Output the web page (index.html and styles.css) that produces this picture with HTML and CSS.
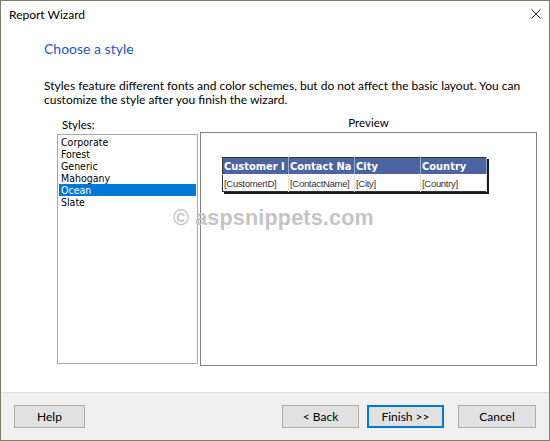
FILE: index.html
```html
<!DOCTYPE html>
<html lang="en">
<head>
  <meta charset="UTF-8" />
  <title>Report Wizard</title>
  <link rel="stylesheet" href="styles.css">
</head>
<body>
  <div class="window">
    <div class="titlebar">
      <span class="title">Report Wizard</span>
      <svg class="close" width="10" height="10" viewBox="0 0 10 10">
        <path d="M0.5 0.5 L9.5 9.5 M9.5 0.5 L0.5 9.5" stroke="#222" stroke-width="1" fill="none" />
      </svg>
    </div>

    <div class="content">
      <h1 class="heading">Choose a style</h1>
      <p class="desc">Styles feature different fonts and color schemes, but do not affect the basic layout. You can customize the style after you finish the wizard.</p>

      <div class="panes">
        <div class="styles-col">
          <div class="label">Styles:</div>
          <ul class="listbox">
            <li>Corporate</li>
            <li>Forest</li>
            <li>Generic</li>
            <li>Mahogany</li>
            <li class="selected">Ocean</li>
            <li>Slate</li>
          </ul>
        </div>
        <div class="preview-col">
          <div class="label center">Preview</div>
          <div class="preview">
            <table class="report">
              <tr class="head">
                <th>Customer I</th>
                <th>Contact Na</th>
                <th>City</th>
                <th>Country</th>
              </tr>
              <tr>
                <td>[CustomerID]</td>
                <td>[ContactName]</td>
                <td>[City]</td>
                <td>[Country]</td>
              </tr>
            </table>
          </div>
        </div>
      </div>

      <div class="watermark">© aspsnippets.com</div>
    </div>

    <div class="footer">
      <button class="btn help">Help</button>
      <div class="spacer"></div>
      <button class="btn back">&lt; Back</button>
      <button class="btn default">Finish &gt;&gt;</button>
      <button class="btn cancel">Cancel</button>
    </div>
  </div>
</body>
</html>
```

FILE: styles.css
```css
body {
  margin: 0;
  font-family: Lato, "Noto Sans", sans-serif;
  background: #fff;
}
.window {
  width: 550px;
  height: 441px;
  box-sizing: border-box;
  border: 1px solid #7b7f68;
  display: flex;
  flex-direction: column;
  background: #fff;
}
.titlebar {
  height: 29px;
  display: flex;
  align-items: center;
  padding: 0 0 0 8px;
  font-size: 12px;
  color: #000;
}
.title {
  flex: 1;
  margin-top: -2px;
}
.close {
  margin-right: 8px;
  margin-top: -3px;
}
.content {
  position: relative;
  flex: 1;
  padding: 0 0 0 42px;
}
.heading {
  margin: 10px 0 0 1px;
  font-size: 14px;
  font-weight: normal;
  color: #2256c6;
  line-height: 18px;
}
.desc {
  margin: 21px 0 0 1px;
  width: 500px;
  font-size: 12px;
  line-height: 14px;
  color: #000;
}
.panes {
  display: grid;
  grid-template-columns: 141px 337px;
  column-gap: 2px;
  margin: 11px 0 0 14px;
}
.label {
  font-size: 11.5px;
  line-height: 14px;
  padding-left: 5px;
  height: 14px;
}
.label.center {
  text-align: center;
  padding-left: 0;
  margin-top: -2px;
}
.listbox {
  list-style: none;
  margin: 2px 0 0 0;
  padding: 1px 1px;
  height: 230px;
  box-sizing: border-box;
  border: 1px solid #a9a9a9;
  font-family: "DejaVu Sans Condensed", "DejaVu Sans", sans-serif;
  font-size: 10.5px;
  line-height: 12px;
  color: #000;
}
.listbox li {
  padding-left: 2px;
  height: 12px;
}
.listbox li.selected {
  background: #0078d7;
  color: #fff;
}
.preview {
  margin-top: 2px;
  height: 234px;
  box-sizing: border-box;
  border: 1px solid #828282;
  padding: 24px 0 0 21px;
}
.report {
  border-collapse: collapse;
  width: 265px;
  border: 1px solid #333;
  box-shadow: 2px 2px 0 #1a1a1a;
  table-layout: fixed;
}
.report th,
.report td {
  text-align: left;
  padding: 0 1px;
  white-space: nowrap;
  overflow: hidden;
}
.report th {
  background: #4c64a2;
  color: #fff;
  font-family: "DejaVu Sans Condensed", "DejaVu Sans", sans-serif;
  font-weight: bold;
  font-size: 11px;
  height: 16px;
  border-right: 1px solid #9aa8cc;
  border-bottom: 1px solid #fff;
}
.report td {
  font-family: "Liberation Sans Narrow", "Liberation Sans", sans-serif;
  font-size: 9.5px;
  color: #333;
  height: 16px;
  border-right: 1px solid #e0e0e0;
  letter-spacing: -0.3px;
}
.watermark {
  position: absolute;
  left: 172px;
  top: 176px;
  font-family: "Liberation Sans", Arial, sans-serif;
  font-weight: bold;
  font-size: 21.5px;
  color: #c4c4c4;
  letter-spacing: 0.2px;
  pointer-events: none;
}
.footer {
  height: 47px;
  background: #f0f0f0;
  border-top: 1px solid #dfdfdf;
  display: flex;
  align-items: center;
  padding: 0 13px 0 13px;
  gap: 8px;
}
.spacer {
  flex: 1;
}
.btn {
  width: 77px;
  height: 23px;
  box-sizing: border-box;
  background: #e1e1e1;
  border: 1px solid #adadad;
  font-family: Lato, "Noto Sans", sans-serif;
  font-size: 12px;
  color: #000;
  padding: 0;
}
.btn.help {
  width: 71px;
}
.btn.default {
  border: 2px solid #0078d7;
}
.btn.cancel {
  margin-left: 6px;
  width: 78px;
}
```
